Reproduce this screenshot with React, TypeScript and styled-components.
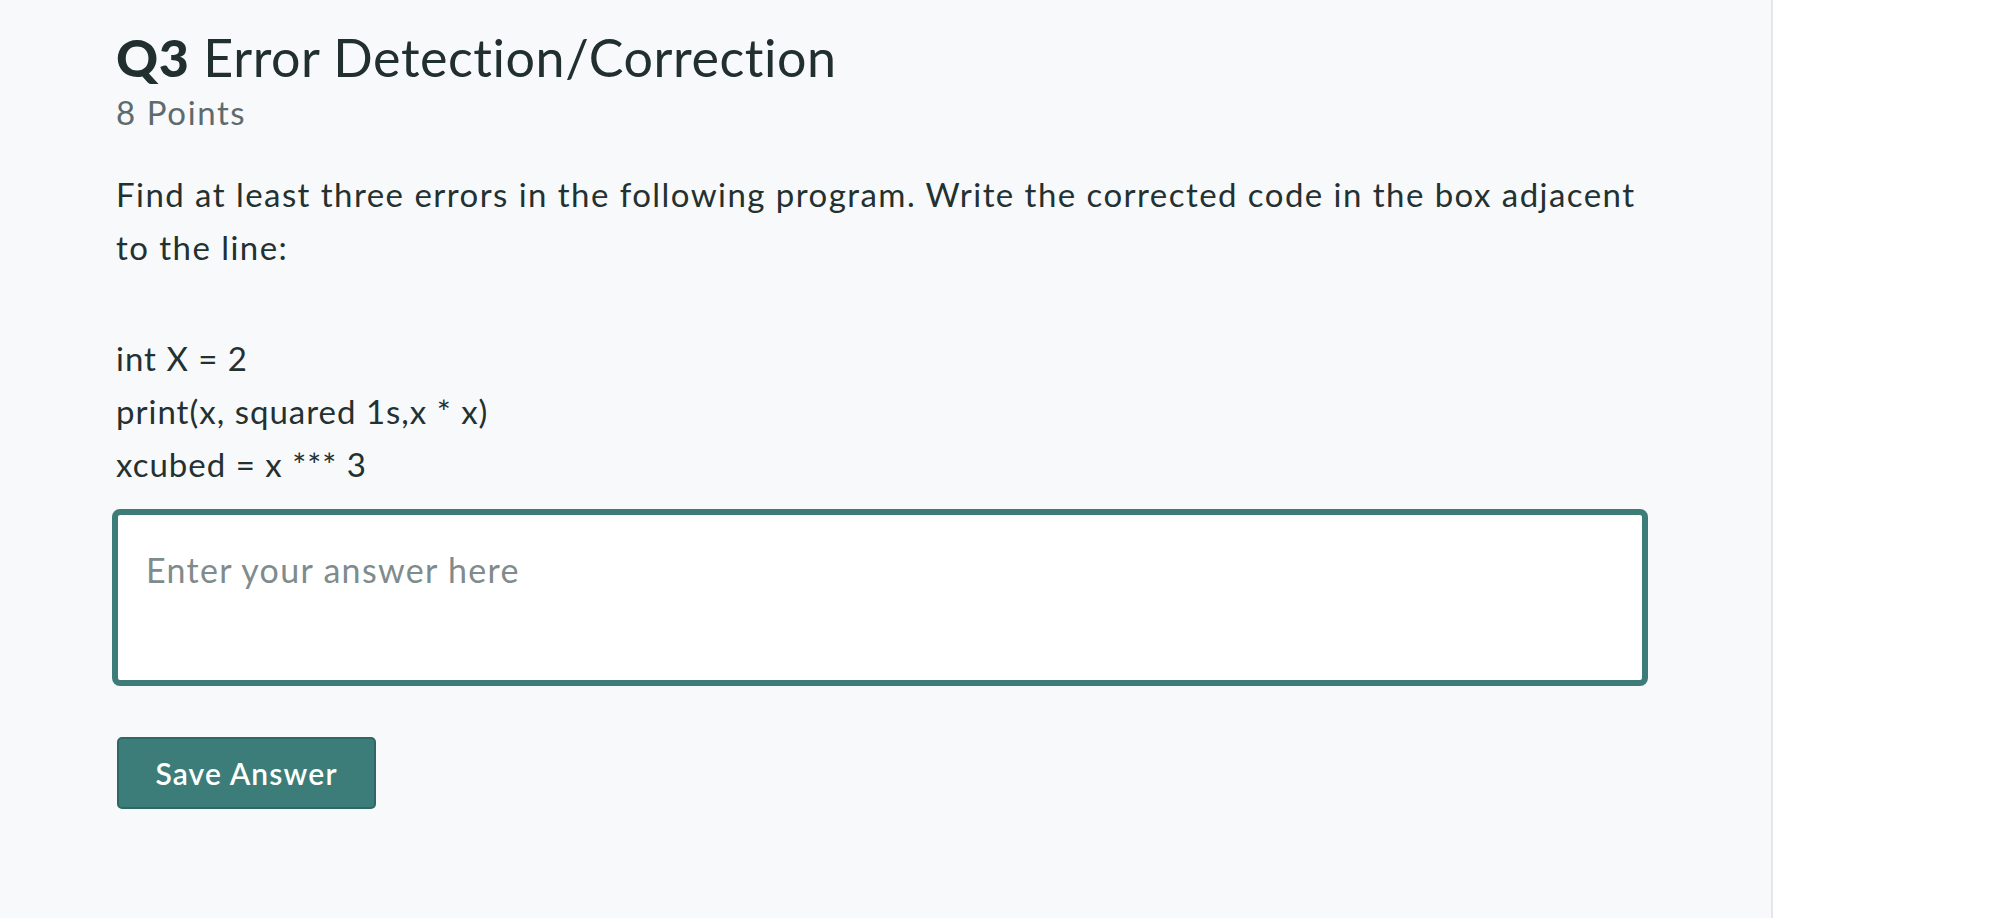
import styled, { createGlobalStyle } from "styled-components";

const GlobalStyle = createGlobalStyle`
  html, body {
    margin: 0;
    padding: 0;
    background: #ffffff;
  }
  body {
    font-family: Lato, "Open Sans", "Liberation Sans", sans-serif;
    color: #233131;
  }
`;

const Page = styled.div`
  display: flex;
  min-height: 100vh;
`;

const Main = styled.main`
  flex: 1;
  background: #f8f9fb;
  border-right: 2px solid #e4e6ea;
  padding: 26px 0 0 116px;
`;

const Side = styled.aside`
  width: 229px;
  background: #ffffff;
`;

const Question = styled.section`
  width: 1532px;
`;

const Title = styled.h1`
  margin: 0;
  font-size: 52px;
  line-height: 1.2;
  font-weight: 400;
  letter-spacing: 0.55px;
  color: #21302f;
`;

const Number = styled.strong`
  font-weight: 900;
`;

const Points = styled.div`
  margin-top: 5px;
  font-size: 33px;
  line-height: 1.2;
  letter-spacing: 1.6px;
  color: #5e6b6e;
`;

const Prompt = styled.p`
  margin: 35px 0 58px;
  font-size: 33px;
  line-height: 53px;
  letter-spacing: 1.45px;
`;

const Code = styled.div`
  font-size: 33px;
  line-height: 53px;
  letter-spacing: 1px;
`;

const Line = styled.div``;

const Answer = styled.textarea`
  display: block;
  box-sizing: border-box;
  width: 1536px;
  height: 177px;
  margin: 18px 0 0 -4px;
  padding: 28px 28px;
  border: 6px solid #3e7c79;
  border-radius: 8px;
  background: #ffffff;
  font-family: inherit;
  font-size: 34px;
  line-height: 53px;
  letter-spacing: 1.3px;
  color: #233131;
  resize: none;
  outline: none;
  caret-color: #233131;
  &::placeholder {
    color: #7f8b8c;
  }
`;

const SaveButton = styled.button`
  display: block;
  box-sizing: border-box;
  margin-top: 51px;
  margin-left: 1px;
  width: 259px;
  height: 72px;
  padding: 0;
  border: 2px solid #2e6764;
  border-radius: 5px;
  background: #3d7d79;
  color: #ffffff;
  font-family: inherit;
  font-size: 30px;
  font-weight: 600;
  letter-spacing: 1.15px;
  cursor: pointer;
`;

export default function App() {
  return (
    <>
      <GlobalStyle />
      <Page>
        <Main>
          <Question>
            <Title>
              <Number>Q3</Number> Error Detection/Correction
            </Title>
            <Points>8 Points</Points>
            <Prompt>
              Find at least three errors in the following program. Write the
              corrected code in the box adjacent to the line:
            </Prompt>
            <Code>
              <Line>int X = 2</Line>
              <Line>print(x, squared 1s,x * x)</Line>
              <Line>xcubed = x *** 3</Line>
            </Code>
            <Answer placeholder="Enter your answer here" autoFocus />
            <SaveButton type="button">Save Answer</SaveButton>
          </Question>
        </Main>
        <Side />
      </Page>
    </>
  );
}
